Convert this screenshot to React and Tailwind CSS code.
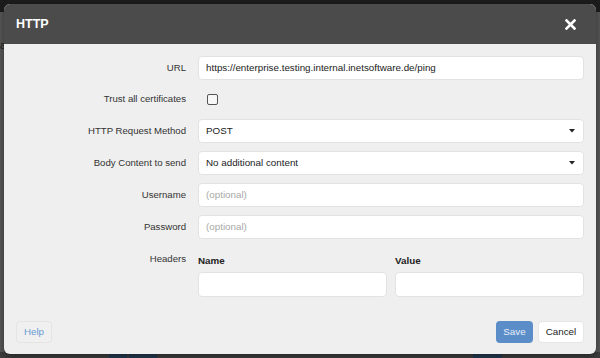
import React from 'react';

const font = { fontFamily: '"Liberation Sans", Arial, sans-serif' };

function Caret() {
  return (
    <svg width="6" height="4" viewBox="0 0 6 4" className="shrink-0">
      <path d="M0 0 H6 L3 3.6 Z" fill="#222" />
    </svg>
  );
}

function Row({ label, children, className = '' }) {
  return (
    <div className={`flex items-center ${className}`}>
      <div className="w-[182px] shrink-0 text-right text-[9.6px] text-[#333]">{label}</div>
      <div className="ml-[12px] flex-1">{children}</div>
    </div>
  );
}

function Input({ value, placeholder }) {
  return (
    <div className="flex h-[24px] items-center rounded-[4px] border border-[#e2e2e2] bg-white px-[7px] text-[9.8px]">
      {value ? <span className="text-[#222]">{value}</span> : <span className="text-[#a8a8a8]">{placeholder}</span>}
    </div>
  );
}

function Select({ value }) {
  return (
    <div className="flex h-[24px] items-center justify-between rounded-[4px] border border-[#e2e2e2] bg-white pl-[7px] pr-[8px] text-[9.8px] text-[#222]">
      <span>{value}</span>
      <Caret />
    </div>
  );
}

export default function App() {
  return (
    <div className="relative h-[358px] w-[600px] overflow-hidden bg-[#555555]" style={font}>
      {/* page behind the overlay */}
      <div className="absolute inset-0 flex flex-col">
        <div className="h-[12px] bg-[#1c1c1c]" />
        <div className="relative flex-1 bg-[#565656]">
          <span className="absolute left-0 top-[28px] text-[11px] leading-none text-[#1a1a1a]">a</span>
        </div>
        <div className="flex h-[6px] bg-[#3c3c3c]">
          <div className="ml-[109px] w-[18px] bg-[#243850]" />
          <div className="ml-[2px] w-[28px] bg-[#243850]" />
          <div className="ml-[316px] w-[29px] bg-[#243850]" />
        </div>
      </div>

      {/* modal */}
      <div className="relative z-10 px-[4px] pt-[4px]">
        <div className="flex h-[350px] flex-col overflow-hidden rounded-[6px] bg-[#efefef] shadow-[0_2px_6px_rgba(0,0,0,0.4)]">
          <div className="flex h-[40px] shrink-0 items-center justify-between bg-[#4b4b4b] pl-[12px] pr-[20px]">
            <span className="text-[12.5px] font-bold text-white">HTTP</span>
            <svg width="11" height="11" viewBox="0 0 11 11">
              <path d="M1.5 1.5 L9.5 9.5 M9.5 1.5 L1.5 9.5" stroke="#fff" strokeWidth="2.6" strokeLinecap="square" />
            </svg>
          </div>

          <div className="flex flex-1 flex-col pr-[12px] pt-[12px]">
            <div className="flex flex-col gap-[8px]">
              <Row label="URL">
                <Input value="https://enterprise.testing.internal.inetsoftware.de/ping" />
              </Row>
              <Row label="Trust all certificates">
                <div className="flex h-[23px] items-center pl-[9px]">
                  <div className="h-[11px] w-[11px] rounded-[2px] border border-[#555] bg-[#f7f7f7]" />
                </div>
              </Row>
              <Row label="HTTP Request Method">
                <Select value="POST" />
              </Row>
              <Row label="Body Content to send">
                <Select value="No additional content" />
              </Row>
              <Row label="Username">
                <Input placeholder="(optional)" />
              </Row>
              <Row label="Password">
                <Input placeholder="(optional)" />
              </Row>
              <div className="flex items-start">
                <div className="w-[182px] shrink-0 pt-[6px] text-right text-[9.6px] leading-[12px] text-[#333]">Headers</div>
                <div className="ml-[12px] grid flex-1 grid-cols-2 gap-x-[8px]">
                  <div className="flex flex-col gap-[5px]">
                    <div className="pt-[8px] text-[9.8px] font-bold leading-[12px] text-[#222]">Name</div>
                    <div className="h-[25px] rounded-[4px] border border-[#e2e2e2] bg-white" />
                  </div>
                  <div className="flex flex-col gap-[5px]">
                    <div className="pt-[8px] text-[9.8px] font-bold leading-[12px] text-[#222]">Value</div>
                    <div className="h-[25px] rounded-[4px] border border-[#e2e2e2] bg-white" />
                  </div>
                </div>
              </div>
            </div>

            <div className="mt-auto mb-[11px] flex items-center justify-between pl-[12px]">
              <div className="flex h-[22px] w-[36px] items-center justify-center rounded-[4px] border border-[#e4e4e4] bg-[#f0f0f0] text-[9.8px] text-[#6a9ad4]">
                Help
              </div>
              <div className="flex gap-[5px]">
                <div className="flex h-[22px] w-[37px] items-center justify-center rounded-[4px] bg-[#5b8dc9] text-[9.8px] text-[#e8eef7]">
                  Save
                </div>
                <div className="flex h-[22px] w-[46px] items-center justify-center rounded-[4px] border border-[#e6e6e6] bg-white text-[9.8px] text-[#222]">
                  Cancel
                </div>
              </div>
            </div>
          </div>
        </div>
      </div>
    </div>
  );
}
